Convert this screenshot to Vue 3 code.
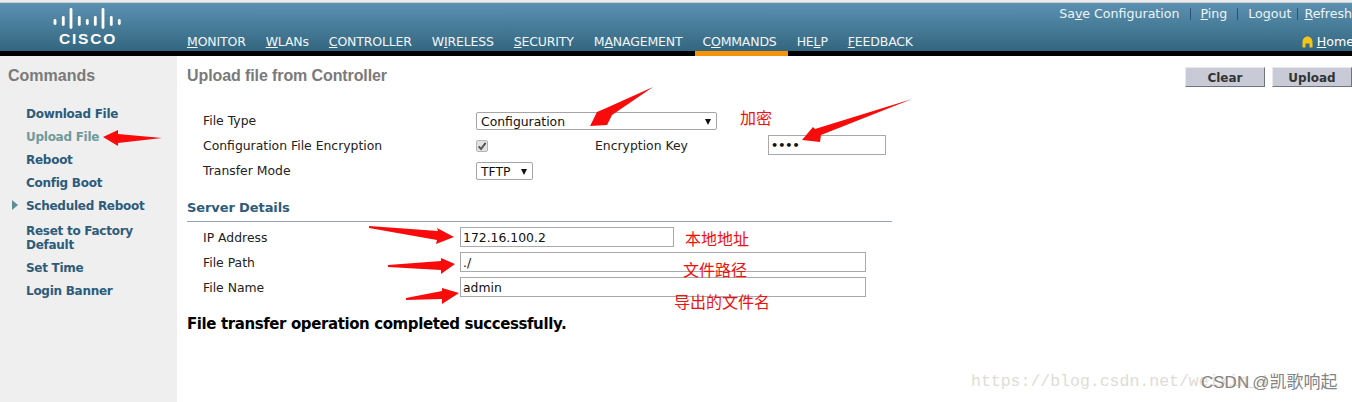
<script setup>
const nav = [
  { pre: '', key: 'M', post: 'ONITOR' },
  { pre: '', key: 'W', post: 'LANs' },
  { pre: '', key: 'C', post: 'ONTROLLER' },
  { pre: 'W', key: 'I', post: 'RELESS' },
  { pre: '', key: 'S', post: 'ECURITY' },
  { pre: 'M', key: 'A', post: 'NAGEMENT' },
  { pre: 'C', key: 'O', post: 'MMANDS', active: true },
  { pre: 'HE', key: 'L', post: 'P' },
  { pre: '', key: 'F', post: 'EEDBACK' }
]
const side = [
  { t: 'Download File' },
  { t: 'Upload File', cur: true },
  { t: 'Reboot' },
  { t: 'Config Boot' },
  { t: 'Scheduled Reboot', exp: true },
  { t: 'Reset to Factory Default', multi: true },
  { t: 'Set Time' },
  { t: 'Login Banner' }
]
const bars = [
  [55, 19, 6], [63.3, 16, 10], [71, 8, 21], [79.3, 16, 10], [87.3, 19, 6],
  [95.3, 16, 10], [103, 8, 21], [111.3, 16, 10], [119.3, 19, 6]
]
const arrows = [
  '653,87 612,115 607,125 590,126 597,112 604,109',
  '912,99 821,135 820,142 802,140 813,127 815,129',
  '103,137 118,130 118,134 162,138 118,143 118,146',
  '369,226 438,231 437,228 454,237 436,244 437,240 369,228',
  '388,265 441,261 441,258 455,264 441,274 441,270 388,267',
  '406,298 442,291 442,288 459,293 442,304 442,299 406,300'
]
</script>

<template>
  <div class="page">
    <div class="strip"></div>
    <header class="head">
      <div class="logo">
        <svg class="bars" width="140" height="32" viewBox="0 0 140 32">
          <rect v-for="b in bars" :key="b[0]" :x="b[0] - 1.4" :y="b[1] - 3" width="2.8" :height="b[2]" rx="1.4" fill="#fff" />
        </svg>
        <span class="cisco">CISCO</span>
      </div>
      <div class="headcol">
        <div class="links">
          <a>Sa<u>v</u>e Configuration</a><i class="sep sep1"></i>
          <a><u>P</u>ing</a><i class="sep sep1"></i>
          <a>Lo<u>g</u>out</a><i class="sep sep2"></i>
          <a><u>R</u>efresh</a>
        </div>
        <div class="navrow">
          <nav class="nav">
            <a v-for="n in nav" :key="n.post" class="navitem" :class="{ on: n.active }">{{ n.pre }}<u>{{ n.key }}</u>{{ n.post }}</a>
          </nav>
          <a class="home">
            <svg width="11" height="12" viewBox="0 0 11 12"><path d="M5.5 0.5 C8.5 0.5 10.5 3 10.5 6 L10.5 11.5 L7.5 11.5 L7.5 7.5 L3.5 7.5 L3.5 11.5 L0.5 11.5 L0.5 6 C0.5 3 2.5 0.5 5.5 0.5 Z" fill="#f5c518" /></svg>
            <span><u>H</u>ome</span>
          </a>
        </div>
      </div>
    </header>
    <div class="black"></div>
    <div class="body">
      <aside class="side">
        <h2 class="sidetitle">Commands</h2>
        <ul class="menu">
          <li v-for="s in side" :key="s.t" :class="{ cur: s.cur, exp: s.exp, multi: s.multi }">{{ s.t }}</li>
        </ul>
      </aside>
      <main class="main">
        <div class="titlerow">
          <h1 class="title">Upload file from Controller</h1>
          <div class="btns">
            <button class="btn">Clear</button>
            <button class="btn">Upload</button>
          </div>
        </div>
        <div class="form1">
          <label>File Type</label>
          <div class="sel sel-wide"><span>Configuration</span><b class="tri"></b></div>
          <label>Configuration File Encryption</label>
          <div class="enc">
            <span class="check">
              <svg width="12" height="12" viewBox="0 0 12 12"><path d="M2.6 6.4 L5 9 L9.6 2.8" fill="none" stroke="#555" stroke-width="2" /></svg>
            </span>
            <label class="enclabel">Encryption Key</label>
            <input class="inp key" type="password" value="1234" />
          </div>
          <label>Transfer Mode</label>
          <div class="sel sel-small"><span>TFTP</span><b class="tri"></b></div>
        </div>
        <h3 class="section">Server Details</h3>
        <div class="form2">
          <label>IP Address</label>
          <input class="inp ip" type="text" value="172.16.100.2" />
          <label>File Path</label>
          <input class="inp long" type="text" value="./" />
          <label>File Name</label>
          <input class="inp long" type="text" value="admin" />
        </div>
        <p class="done">File transfer operation completed successfully.</p>
      </main>
    </div>

    <svg class="overlay" width="1352" height="402" viewBox="0 0 1352 402">
      <polygon v-for="a in arrows" :key="a" :points="a" fill="#f80b0b" />
    </svg>
    <span class="note n1">加密</span>
    <span class="note n2">本地地址</span>
    <span class="note n3">文件路径</span>
    <span class="note n4">导出的文件名</span>
    <span class="wm">https://blog.csdn.net/weixin_4</span>
    <span class="csdn">CSDN @凯歌响起</span>
  </div>
</template>

<style>
html, body { margin: 0; padding: 0; background: #fff; }
</style>

<style scoped>
.page {
  position: relative;
  width: 1352px;
  height: 402px;
  overflow: hidden;
  display: flex;
  flex-direction: column;
  font-family: "DejaVu Sans", Verdana, sans-serif;
  font-size: 12.4px;
  color: #222;
  background: #fff;
}
.strip { height: 3px; flex: none; background: #ececec; box-sizing: border-box; border-bottom: 1px solid #d0d0d0; }
.head {
  height: 48px;
  flex: none;
  display: flex;
  background: linear-gradient(#5b91b1, #33667f);
  color: #fff;
  overflow: hidden;
}
.logo { width: 187px; flex: none; position: relative; }
.bars { position: absolute; left: 0; top: 0; }
.cisco {
  position: absolute;
  left: 59px;
  top: 27px;
  font: bold 15.5px/18px "Liberation Sans", sans-serif;
  letter-spacing: 1.8px;
  color: #fff;
}
.headcol { flex: 1; min-width: 0; display: flex; flex-direction: column; }
.links {
  height: 24px;
  display: flex;
  justify-content: flex-end;
  align-items: center;
  padding-bottom: 3px;
  box-sizing: border-box;
  white-space: nowrap;
  font-size: 12.6px;
  color: #eef4f8;
}
.sep { display: block; width: 1px; height: 12px; background: #2d4f78; }
.sep1 { margin: 0 10px; }
.sep2 { margin: 0 6px; }
.navrow { flex: 1; display: flex; justify-content: space-between; align-items: flex-end; }
.nav { display: flex; margin-left: -10px; }
.navitem {
  padding: 0 10px 2px;
  line-height: 15px;
  white-space: nowrap;
  color: #f2f6f9;
  font-size: 12.5px;
  letter-spacing: -0.17px;
}
.home { display: flex; align-items: center; gap: 4px; padding-bottom: 2px; margin-right: -2px; line-height: 15px; font-size: 12.6px; white-space: nowrap; }
.black { height: 5px; flex: none; background: #000; position: relative; }
.black::after {
  content: "";
  position: absolute;
  left: 695px;
  top: 0;
  width: 93px;
  height: 5px;
  background: #f7930a;
}
.body { flex: 1; display: flex; min-height: 0; }
.side { width: 177px; flex: none; background: #efefef; box-sizing: border-box; padding: 11px 0 0 8px; }
.sidetitle {
  margin: 0;
  font: bold 16px/18px "Liberation Sans", sans-serif;
  color: #7a7a7a;
}
.menu { list-style: none; margin: 22px 0 0; padding: 0 0 0 18px; }
.menu li {
  position: relative;
  font-weight: bold;
  font-size: 12px;
  letter-spacing: -0.27px;
  line-height: 14px;
  margin-bottom: 9px;
  color: #2d5c7b;
  white-space: nowrap;
}
.menu li.multi { white-space: normal; width: 120px; margin-top: 11px; }
.menu li.cur { color: #6f9a9c; }
.menu li.exp::before {
  content: "";
  position: absolute;
  left: -14px;
  top: 1px;
  border-left: 6px solid #5b8f94;
  border-top: 5px solid transparent;
  border-bottom: 5px solid transparent;
}
.main { flex: 1; min-width: 0; box-sizing: border-box; padding: 11px 0 0 10px; }
.titlerow { display: flex; justify-content: space-between; align-items: flex-start; height: 41px; }
.title { margin: 0; font: bold 16px/18px "Liberation Sans", sans-serif; letter-spacing: -0.1px; color: #7a7a7a; }
.btns { display: flex; gap: 7px; }
.btn {
  width: 80px;
  height: 20px;
  padding: 2px 0 0;
  box-sizing: border-box;
  background: #c8cbd6;
  border: 1px solid;
  border-color: #e8e8ee #70747f #70747f #e8e8ee;
  font: bold 12px/16px "DejaVu Sans", sans-serif;
  color: #333;
}
.form1 {
  display: grid;
  grid-template-columns: 273px 1fr;
  grid-auto-rows: 25px;
  padding-left: 16px;
  align-items: center;
}
.form1 label, .form2 label { white-space: nowrap; }
.sel {
  box-sizing: border-box;
  height: 18px;
  margin-top: 1px;
  border: 1px solid #a5a5a5;
  border-radius: 2px;
  display: flex;
  align-items: center;
  justify-content: space-between;
  padding: 1px 4px 0;
  background: #fff;
  line-height: 16px;
  color: #111;
}
.sel-wide { width: 241px; }
.sel-small { width: 57px; }
.tri { width: 0; height: 0; border-left: 3.5px solid transparent; border-right: 3.5px solid transparent; border-top: 6px solid #111; margin-right: 1px; }
.enc { display: flex; align-items: center; }
.check {
  box-sizing: border-box;
  width: 12px;
  height: 12px;
  background: #e2e2e2;
  border: 1px solid #b5b5b5;
  border-radius: 2px;
  display: flex;
  align-items: center;
  justify-content: center;
}
.check svg { flex: none; }
.enclabel { margin-left: 107px; width: 173px; }
.inp {
  box-sizing: border-box;
  height: 20px;
  margin-bottom: 1px;
  padding: 0 2px;
  border: 1px solid #a9a9a9;
  background: #fff;
  font: 12.4px "DejaVu Sans", sans-serif;
  color: #111;
  outline: none;
  display: block;
}
.key { width: 118px; font: bold 11.2px "DejaVu Sans", sans-serif; }
.ip { width: 214px; }
.long { width: 406px; }
.section {
  margin: 16px 0 0;
  width: 705px;
  height: 23px;
  box-sizing: border-box;
  border-bottom: 1px solid #98a3b8;
  font-weight: bold;
  font-size: 13px;
  letter-spacing: -0.1px;
  line-height: 18px;
  color: #2d5c7b;
}
.form2 {
  display: grid;
  grid-template-columns: 257px 1fr;
  grid-auto-rows: 25px;
  padding-left: 16px;
  padding-top: 3px;
  align-items: center;
}
.done { margin: 14px 0 0; font-weight: bold; font-size: 15px; line-height: 20px; color: #000; letter-spacing: -0.4px; }
.overlay { position: absolute; left: 0; top: 0; pointer-events: none; }
.note { position: absolute; font: 16px/20px "Noto Sans CJK SC", sans-serif; color: #f01010; white-space: nowrap; }
.n1 { left: 740px; top: 107px; }
.n2 { left: 685px; top: 228px; }
.n3 { left: 683px; top: 259px; }
.n4 { left: 674px; top: 291px; }
.wm { position: absolute; left: 971px; top: 372px; font: 16.5px/20px "Liberation Mono", monospace; color: #dedcd6; white-space: nowrap; }
.csdn { position: absolute; left: 1201px; top: 373px; font: 17px/20px "Liberation Sans", "Noto Sans CJK SC", sans-serif; word-spacing: -1.7px; color: #848484; white-space: nowrap; }
</style>
